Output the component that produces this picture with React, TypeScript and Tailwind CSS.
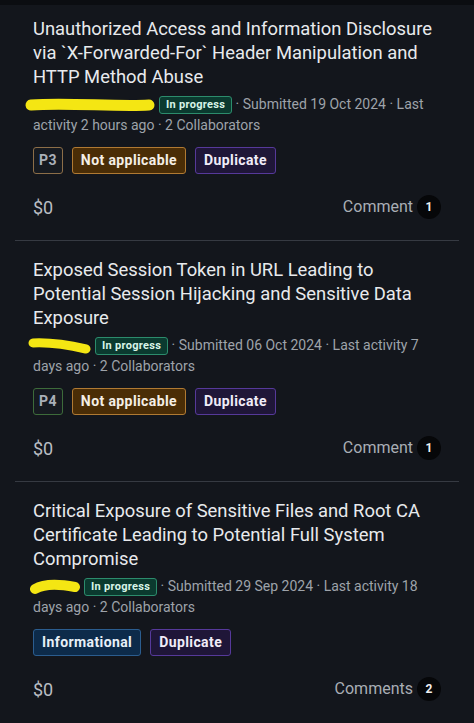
import React from "react";

type Tag = { label: string; cls: string };

type Report = {
  title: string;
  scribble: { ml: string; w: number; d: string; sw: number };
  submitted: string;
  activity: string;
  tags: Tag[];
  comments: string;
  count: number;
};

const tagStyles = {
  p3: "border-[#8c6e48] bg-[#161a20] text-[#aab0b8] px-[5px]",
  p4: "border-[#3d6b3a] bg-[#161a20] text-[#aab0b8] px-[5px]",
  na: "border-[#b07a33] bg-[#4a2d06] text-[#f5efe6] px-[8px]",
  dup: "border-[#56399a] bg-[#1f1638] text-[#f0ecf8] px-[8px]",
  info: "border-[#2b5d8f] bg-[#0d2b4a] text-[#e8f0f8] px-[8px]",
};

const reports: Report[] = [
  {
    title: "Unauthorized Access and Information Disclosure via `X-Forwarded-For` Header Manipulation and HTTP Method Abuse",
    scribble: { ml: "-ml-[8px]", w: 130, d: "M6 8 C 40 5, 90 10, 124 8", sw: 11 },
    submitted: "Submitted 19 Oct 2024",
    activity: "Last activity 2 hours ago",
    tags: [
      { label: "P3", cls: tagStyles.p3 },
      { label: "Not applicable", cls: tagStyles.na },
      { label: "Duplicate", cls: tagStyles.dup },
    ],
    comments: "Comment",
    count: 1,
  },
  {
    title: "Exposed Session Token in URL Leading to Potential Session Hijacking and Sensitive Data Exposure",
    scribble: { ml: "-ml-[5px]", w: 63, d: "M5 5 C 25 4, 45 8, 58 11", sw: 9 },
    submitted: "Submitted 06 Oct 2024",
    activity: "Last activity 7 days ago",
    tags: [
      { label: "P4", cls: tagStyles.p4 },
      { label: "Not applicable", cls: tagStyles.na },
      { label: "Duplicate", cls: tagStyles.dup },
    ],
    comments: "Comment",
    count: 1,
  },
  {
    title: "Critical Exposure of Sensitive Files and Root CA Certificate Leading to Potential Full System Compromise",
    scribble: { ml: "-ml-[3px]", w: 50, d: "M5 10 C 15 4, 30 5, 45 8", sw: 10 },
    submitted: "Submitted 29 Sep 2024",
    activity: "Last activity 18 days ago",
    tags: [
      { label: "Informational", cls: tagStyles.info },
      { label: "Duplicate", cls: tagStyles.dup },
    ],
    comments: "Comments",
    count: 2,
  },
];

export default function App() {
  return (
    <div className="min-h-screen bg-[#13161c] font-['Roboto',sans-serif]">
      <div className="h-[5px] bg-[#0b0d11]" />
      <div className="px-[15px]">
        {reports.map((r, i) => (
          <div
            key={i}
            className={`px-[18px] pb-[19px] ${i === 0 ? "pt-[12px]" : "pt-[17px]"} ${
              i < reports.length - 1 ? "border-b border-[#363a42]" : ""
            }`}
          >
            {/* Title */}
            <h2 className="text-[18.4px] leading-[24px] text-[#e8eaed]">{r.title}</h2>

            {/* Meta */}
            <p className="mt-[5px] text-[14px] leading-[21px] text-[#9ea3aa]">
              <svg
                width={r.scribble.w}
                height={16}
                viewBox={`0 0 ${r.scribble.w} 16`}
                className={`inline-block align-middle mr-1 ${r.scribble.ml}`}
              >
                <path d={r.scribble.d} stroke="#f4e613" strokeWidth={r.scribble.sw} strokeLinecap="round" fill="none" />
              </svg>
              <span className="inline-block align-middle rounded-[3px] border border-[#2c8c6c] bg-[#0b3a2f] px-[6px] text-[11px] font-bold leading-[16px] tracking-[0.3px] text-[#d8f5e8]">
                In progress
              </span>
              {" · "}
              {r.submitted}
              {" · "}
              {r.activity}
              {" · 2 Collaborators"}
            </p>

            {/* Tags */}
            <div className="mt-[11px] flex gap-[9px]">
              {r.tags.map((t) => (
                <span
                  key={t.label}
                  className={`flex h-[27px] items-center rounded-[3px] border text-[14px] font-bold tracking-[0.4px] ${t.cls}`}
                >
                  {t.label}
                </span>
              ))}
            </div>

            {/* Bounty + comments */}
            <div className="mt-[19px] flex h-[28px] items-center justify-between">
              <span className="text-[18px] text-[#b9bdc3]">$0</span>
              <span className="flex items-center text-[16px] text-[#a9aeb5]">
                {r.comments}
                <span className="ml-[4px] flex h-6 w-6 items-center justify-center rounded-full bg-[#060709] text-[12px] font-bold text-[#f0f0f0]">
                  {r.count}
                </span>
              </span>
            </div>
          </div>
        ))}
      </div>
    </div>
  );
}
